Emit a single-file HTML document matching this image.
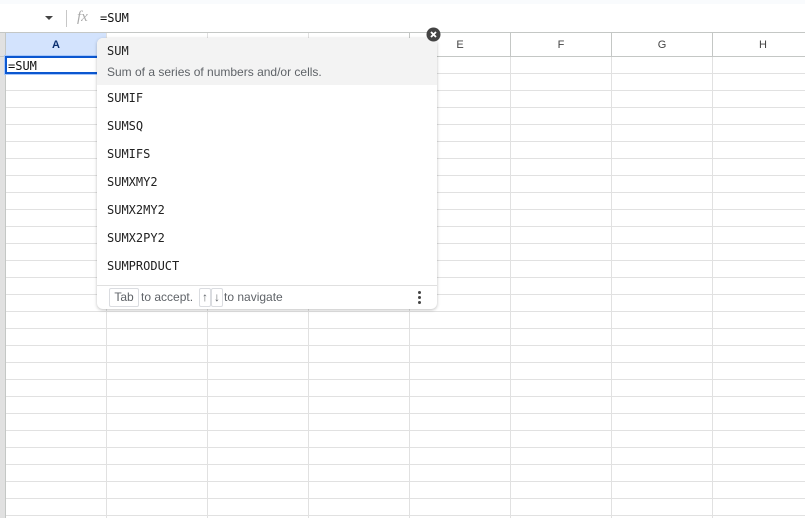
<!DOCTYPE html>
<html><head><style>
body{margin:0;width:805px;height:518px;overflow:hidden;background:#fff;font-family:"Liberation Sans",sans-serif;position:relative}
.abs{position:absolute}
.mono{font-family:"DejaVu Sans Mono","Liberation Mono",monospace}
</style></head><body>
<div class="abs" style="left:0;top:0;width:805px;height:4px;background:#f9fbfd"></div>
<div class="abs" style="left:45px;top:16px;width:0;height:0;border-left:4px solid transparent;border-right:4px solid transparent;border-top:4px solid #444"></div>
<div class="abs" style="left:66px;top:10px;width:1px;height:17px;background:#c7c7c7"></div>
<div class="abs" style="left:77px;top:9px;font-family:'Liberation Serif',serif;font-style:italic;font-size:15px;color:#aaa">fx</div>
<div class="abs mono" style="left:100px;top:11px;font-size:12px;color:#111">=SUM</div>
<div class="abs" style="left:0;top:32px;width:805px;height:1px;background:#c4c7c5"></div>
<svg class="abs" style="left:0;top:0" width="805" height="518">
<rect x="0" y="33" width="5" height="485" fill="#e1e1e1"/>
<rect x="5" y="33" width="101" height="23" fill="#d3e3fd"/>
<g stroke="#e1e1e1" stroke-width="1">
<line x1="0" y1="73.5" x2="805" y2="73.5"/>
<line x1="0" y1="90.5" x2="805" y2="90.5"/>
<line x1="0" y1="107.5" x2="805" y2="107.5"/>
<line x1="0" y1="124.5" x2="805" y2="124.5"/>
<line x1="0" y1="141.5" x2="805" y2="141.5"/>
<line x1="0" y1="158.5" x2="805" y2="158.5"/>
<line x1="0" y1="175.5" x2="805" y2="175.5"/>
<line x1="0" y1="192.5" x2="805" y2="192.5"/>
<line x1="0" y1="209.5" x2="805" y2="209.5"/>
<line x1="0" y1="226.5" x2="805" y2="226.5"/>
<line x1="0" y1="243.5" x2="805" y2="243.5"/>
<line x1="0" y1="260.5" x2="805" y2="260.5"/>
<line x1="0" y1="277.5" x2="805" y2="277.5"/>
<line x1="0" y1="294.5" x2="805" y2="294.5"/>
<line x1="0" y1="311.5" x2="805" y2="311.5"/>
<line x1="0" y1="328.5" x2="805" y2="328.5"/>
<line x1="0" y1="345.5" x2="805" y2="345.5"/>
<line x1="0" y1="362.5" x2="805" y2="362.5"/>
<line x1="0" y1="379.5" x2="805" y2="379.5"/>
<line x1="0" y1="396.5" x2="805" y2="396.5"/>
<line x1="0" y1="413.5" x2="805" y2="413.5"/>
<line x1="0" y1="430.5" x2="805" y2="430.5"/>
<line x1="0" y1="447.5" x2="805" y2="447.5"/>
<line x1="0" y1="464.5" x2="805" y2="464.5"/>
<line x1="0" y1="481.5" x2="805" y2="481.5"/>
<line x1="0" y1="498.5" x2="805" y2="498.5"/>
<line x1="0" y1="515.5" x2="805" y2="515.5"/>
<line x1="106.5" y1="33" x2="106.5" y2="518"/>
<line x1="207.5" y1="33" x2="207.5" y2="518"/>
<line x1="308.5" y1="33" x2="308.5" y2="518"/>
<line x1="409.5" y1="33" x2="409.5" y2="518"/>
<line x1="510.5" y1="33" x2="510.5" y2="518"/>
<line x1="611.5" y1="33" x2="611.5" y2="518"/>
<line x1="712.5" y1="33" x2="712.5" y2="518"/>
</g>
<g stroke="#c4c7c5"><line x1="0" y1="56.5" x2="805" y2="56.5"/><line x1="5.5" y1="33" x2="5.5" y2="518"/>
<line x1="409.5" y1="33" x2="409.5" y2="56"/><line x1="510.5" y1="33" x2="510.5" y2="56"/><line x1="611.5" y1="33" x2="611.5" y2="56"/><line x1="712.5" y1="33" x2="712.5" y2="56"/></g>
<g font-family="Liberation Sans" font-size="11" fill="#444" text-anchor="middle">
<text x="56" y="48" fill="#0b2f70" font-weight="bold">A</text>
<text x="460" y="48">E</text><text x="561" y="48">F</text><text x="662" y="48">G</text><text x="763" y="48">H</text>
</g>
</svg>
<div class="abs" style="left:4px;top:55px;width:100px;height:20px;border:1px solid #a8c7fa;box-sizing:border-box"></div>
<div class="abs" style="left:5px;top:56px;width:98px;height:18px;border:2px solid #0b57d0;box-sizing:border-box;background:#fff"></div>
<div class="abs mono" style="left:8px;top:59px;font-size:12px;color:#111">=SUM</div>
<div class="abs" style="left:97px;top:38px;width:340px;height:271px;background:#fff;border-radius:6px;box-shadow:0 1px 3px rgba(0,0,0,.25);overflow:hidden">
<div style="height:47px;background:#f3f3f3;position:relative">
<div class="abs mono" style="left:10px;top:6px;font-size:12px;color:#222">SUM</div>
<div class="abs" style="left:10px;top:27px;font-size:12px;color:#5f6368">Sum of a series of numbers and/or cells.</div>
</div>
<div class="mono" style="font-size:12px;color:#222;padding-left:10px">
<div style="position:absolute;top:53px">SUMIF</div>
<div style="position:absolute;top:81px">SUMSQ</div>
<div style="position:absolute;top:109px">SUMIFS</div>
<div style="position:absolute;top:137px">SUMXMY2</div>
<div style="position:absolute;top:165px">SUMX2MY2</div>
<div style="position:absolute;top:193px">SUMX2PY2</div>
<div style="position:absolute;top:221px">SUMPRODUCT</div>
</div>
<div class="abs" style="left:0;top:247px;width:340px;height:1px;background:#e0e0e0"></div>
<div class="abs" style="left:12px;top:250px;height:17px;width:28px;border:1px solid #dadce0;border-radius:2px;font-size:12px;color:#5f6368;text-align:center;line-height:17px">Tab</div>
<div class="abs" style="left:44px;top:252px;font-size:12px;color:#5f6368">to accept.</div>
<div class="abs" style="left:102px;top:250px;height:17px;width:10px;border:1px solid #dadce0;border-radius:2px;font-size:12px;color:#5f6368;text-align:center;line-height:17px">↑</div>
<div class="abs" style="left:114px;top:250px;height:17px;width:10px;border:1px solid #dadce0;border-radius:2px;font-size:12px;color:#5f6368;text-align:center;line-height:17px">↓</div>
<div class="abs" style="left:127px;top:252px;font-size:12px;color:#5f6368">to navigate</div>
<div class="abs" style="left:321px;top:253px;width:3px;height:3px;border-radius:2px;background:#444;box-shadow:0 5px 0 #444,0 10px 0 #444"></div>
</div>
<svg class="abs" style="left:426px;top:27px" width="15" height="15"><circle cx="7.5" cy="7.5" r="7" fill="#444"/><path d="M5 5L10 10M10 5L5 10" stroke="#fff" stroke-width="1.8"/></svg>
</body></html>
